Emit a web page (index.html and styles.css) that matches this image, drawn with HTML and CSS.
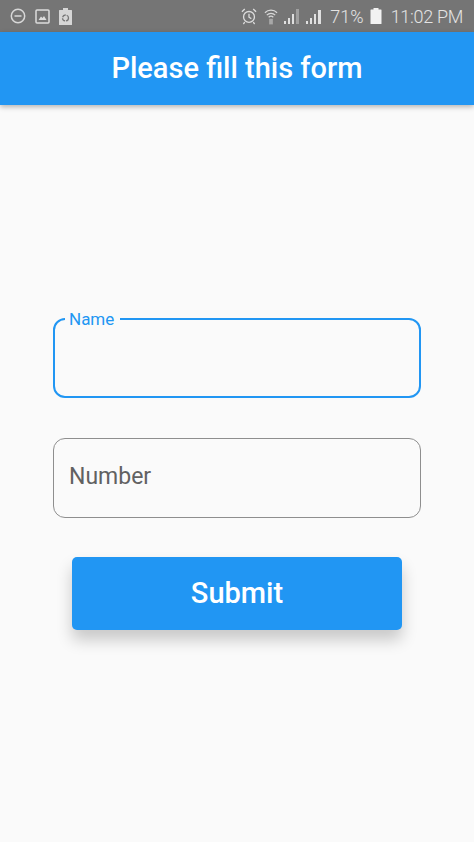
FILE: index.html
```html
<!DOCTYPE html>
<html lang="en">
<head>
    <meta charset="UTF-8">
    <meta name="viewport" content="width=device-width, initial-scale=1.0">
    <title>Please fill this form</title>
    <link rel="stylesheet" href="styles.css">
</head>
<body>
<div class="status-bar">
    <div class="status-left">
        <svg width="16" height="16" viewBox="0 0 16 16"><circle cx="8" cy="8" r="6.7" fill="none" stroke="#d8d8d8" stroke-width="1.5"/><path d="M4.5 8h7" stroke="#d8d8d8" stroke-width="1.5"/></svg>
        <svg width="15" height="15" viewBox="0 0 15 15"><rect x="1" y="1" width="13" height="13" rx="1" fill="none" stroke="#dcdcdc" stroke-width="1.5"/><path d="M3.5 11l2.5-3.500 1.500 1.500 1.500-2 2.500 4z" fill="#dcdcdc"/></svg>
        <svg width="13" height="17" viewBox="0 0 13 17"><path d="M4 0h5v2h3.500a.5.5 0 0 1 .5.5v14a.5.5 0 0 1-.5.5H.5a.5.5 0 0 1-.5-.5v-14A.5.5 0 0 1 .5 2H4z" fill="#d6d6d6"/><circle cx="6.500" cy="10" r="3" fill="none" stroke="#777" stroke-width="1.300" stroke-dasharray="4 1"/></svg>
    </div>
    <div class="status-right">
        <svg class="alarm" width="16" height="18" viewBox="0 0 17 18"><circle cx="8.500" cy="10" r="5.800" fill="none" stroke="#dcdcdc" stroke-width="1.400"/><path d="M8.500 6.500v3.800l2.500 1.500M1 4.500l3-3M16 4.500l-3-3M4 15.500l-1.500 2M13 15.500l1.500 2" fill="none" stroke="#dcdcdc" stroke-width="1.400"/></svg>
        <svg class="wifi" width="14" height="18" viewBox="0 0 15 18"><path d="M1 5.500c3.500-3.600 9.500-3.600 13 0M3 8c2.500-2.400 6.500-2.400 9 0M5 10.300c1.400-1.200 3.600-1.200 5 0" fill="none" stroke="#d8d8d8" stroke-width="1.300"/><path d="M5.500 12h4v6h-4z" fill="#a8a8a8"/></svg>
        <svg class="signal first" width="16" height="16" viewBox="0 0 16 16"><path d="M0 13h2v3H0zM4 10h2v6H4zM8 6h2v10H8z" fill="#e0e0e0"/><path d="M12 1h3v15h-3z" fill="#a0a0a0"/></svg>
        <svg class="signal" width="16" height="16" viewBox="0 0 16 16"><path d="M0 13h2v3H0zM4 10h2v6H4zM8 6h2v10H8zM12 2h3v14h-3z" fill="#e0e0e0"/></svg>
        <span class="battery-text">71%</span>
        <svg class="battery" width="12" height="16" viewBox="0 0 11 16"><path d="M3 0h5v1.500h2.500a.5.5 0 0 1 .5.5v13.500a.5.5 0 0 1-.5.5H.5a.5.5 0 0 1-.5-.5V2a.5.5 0 0 1 .5-.5H3z" fill="#f2f2f2"/></svg>
        <span class="clock">11:02 PM</span>
    </div>
</div>

<header class="app-bar">Please fill this form</header>

<main class="form">
    <fieldset class="field active">
        <legend>Name</legend>
    </fieldset>
    <div class="field number">Number</div>
    <button class="submit">Submit</button>
</main>
</body>
</html>
```

FILE: styles.css
```css
* {
    margin: 0;
    padding: 0;
    box-sizing: border-box;
    font-family: Roboto, 'Liberation Sans', sans-serif;
}

body {
    width: 474px;
    height: 842px;
    overflow: hidden;
    background: #fafafa;
}

.status-bar {
    display: flex;
    justify-content: space-between;
    align-items: center;
    height: 32px;
    padding: 0 11px 0 10px;
    background: #757575;
    color: #e4e4e4;
}

.status-left {
    display: flex;
    align-items: center;
    gap: 9px;
}

.status-right {
    display: flex;
    align-items: center;
}

.alarm {
    margin-right: 7px;
}

.wifi {
    margin-right: 6px;
}

.signal {
    margin-right: 8px;
}

.signal.first {
    margin-right: 6px;
}

.battery-text {
    font-size: 18px;
    font-weight: 300;
    margin-right: 6px;
}

.battery {
    margin-right: 9px;
}

.clock {
    font-size: 18px;
    font-weight: 300;
    letter-spacing: -0.3px;
}

.app-bar {
    position: relative;
    height: 73px;
    line-height: 72px;
    text-align: center;
    font-size: 29px;
    font-weight: 500;
    color: #fff;
    background: #2196f3;
    box-shadow: 0 2px 5px rgba(0, 0, 0, 0.28);
}

.form {
    display: flex;
    flex-direction: column;
    padding: 213px 53px 0;
}

.field {
    height: 80px;
    border: 1px solid #8e8e8e;
    border-radius: 12px;
}

.field.active {
    height: 87px;
    margin-top: -7px;
    min-width: 0;
    border: 2px solid #2196f3;
    padding-left: 10px;
}

.field.active legend {
    height: 16px;
    padding: 0 6px 0 4px;
    font-size: 17px;
    line-height: 16px;
    color: #2196f3;
}

.field.number {
    margin-top: 40px;
    padding-left: 15px;
    line-height: 76px;
    font-size: 23px;
    color: #616161;
}

.submit {
    align-self: center;
    width: 330px;
    height: 73px;
    margin-top: 39px;
    padding-bottom: 2px;
    border: none;
    border-radius: 5px;
    font-size: 29px;
    font-weight: 500;
    color: #fff;
    background: #2196f3;
    box-shadow: 0 10px 16px rgba(0, 0, 0, 0.2);
}
```
